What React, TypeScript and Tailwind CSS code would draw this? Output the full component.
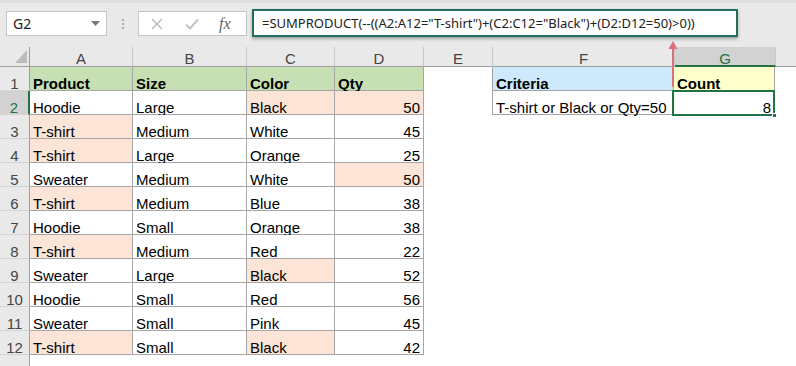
import React from 'react';

type Cell = { v: string; hl?: boolean; num?: boolean };

const rows: Cell[][] = [
  [{ v: 'Hoodie' }, { v: 'Large' }, { v: 'Black', hl: true }, { v: '50', num: true, hl: true }],
  [{ v: 'T-shirt', hl: true }, { v: 'Medium' }, { v: 'White' }, { v: '45', num: true }],
  [{ v: 'T-shirt', hl: true }, { v: 'Large' }, { v: 'Orange' }, { v: '25', num: true }],
  [{ v: 'Sweater' }, { v: 'Medium' }, { v: 'White' }, { v: '50', num: true, hl: true }],
  [{ v: 'T-shirt', hl: true }, { v: 'Medium' }, { v: 'Blue' }, { v: '38', num: true }],
  [{ v: 'Hoodie' }, { v: 'Small' }, { v: 'Orange' }, { v: '38', num: true }],
  [{ v: 'T-shirt', hl: true }, { v: 'Medium' }, { v: 'Red' }, { v: '22', num: true }],
  [{ v: 'Sweater' }, { v: 'Large' }, { v: 'Black', hl: true }, { v: '52', num: true }],
  [{ v: 'Hoodie' }, { v: 'Small' }, { v: 'Red' }, { v: '56', num: true }],
  [{ v: 'Sweater' }, { v: 'Small' }, { v: 'Pink' }, { v: '45', num: true }],
  [{ v: 'T-shirt', hl: true }, { v: 'Small' }, { v: 'Black', hl: true }, { v: '42', num: true }],
];

const colWidths = ['w-[103px]', 'w-[114px]', 'w-[88px]', 'w-[89px]'];
const letters = ['A', 'B', 'C', 'D', 'E', 'F'];
const letterWidths = ['w-[103px]', 'w-[114px]', 'w-[88px]', 'w-[89px]', 'w-[69px]', 'w-[182px]'];

const RowNum: React.FC<{ n: number; active?: boolean }> = ({ n, active }) => (
  <div
    className={`w-[30px] shrink-0 h-full flex items-end justify-center pb-[1px] border-b border-[#d4d4d4] ${
      active
        ? 'bg-[#d2d2d2] text-[#217346] border-r-2 border-r-[#217346]'
        : 'bg-[#e9e9e9] text-[#444] border-r border-r-[#9e9e9e]'
    }`}
  >
    {n}
  </div>
);

const App: React.FC = () => {
  return (
    <div className="w-[796px] h-[366px] overflow-hidden bg-white text-[15px] leading-[11px]" style={{ fontFamily: '"Liberation Sans", Arial, sans-serif' }}>
      {/* Formula bar */}
      <div className="h-[47px] bg-[#e9e9e9] border-t-[3px] border-[#dedede] flex items-start pt-[8px] pl-[6px] leading-none">
        <div className="w-[101px] h-[25px] bg-white border border-[#c6c6c6] flex items-center justify-between px-[6px] text-[14px] text-[#222]" style={{ fontFamily: '"Noto Sans", sans-serif' }}>
          <span>G2</span>
          <svg width="9" height="5" viewBox="0 0 9 5"><path d="M0 0h9L4.5 5z" fill="#777" /></svg>
        </div>
        <div className="w-[31px] h-[25px] flex flex-col items-center justify-center gap-[2px]">
          <span className="w-[2px] h-[2px] bg-[#aaa]" />
          <span className="w-[2px] h-[2px] bg-[#aaa]" />
          <span className="w-[2px] h-[2px] bg-[#aaa]" />
        </div>
        <div className="w-[109px] h-[25px] bg-white border border-[#c6c6c6] flex items-center pl-[12px]">
          <svg width="12" height="12" viewBox="0 0 12 12"><path d="M1 1l10 10M11 1L1 11" stroke="#bdbdbd" strokeWidth="1.5" /></svg>
          <svg className="ml-[22px]" width="14" height="12" viewBox="0 0 14 12"><path d="M1 6.5l4 4L13 1.5" stroke="#c4c4c4" strokeWidth="2" fill="none" /></svg>
          <span className="ml-[20px] text-[16px] italic text-[#666]" style={{ fontFamily: '"Liberation Serif", serif' }}>fx</span>
        </div>
        <div className="ml-[5px] -mt-[2px] w-[486px] h-[28px] bg-white border-2 border-[#1f6e5f] shadow-[0_2px_3px_rgba(0,0,0,0.3)] flex items-center pl-[8px] text-[13px] text-[#222] whitespace-nowrap overflow-hidden" style={{ fontFamily: '"Noto Sans", sans-serif' }}>
          =SUMPRODUCT(--((A2:A12="T-shirt")+(C2:C12="Black")+(D2:D12=50)&gt;0))
        </div>
      </div>

      {/* Sheet */}
      <div className="relative">
        {/* Column headers */}
        <div className="flex h-[20px] bg-[#e9e9e9] text-[#444]">
          <div className="w-[30px] shrink-0 border-r border-b border-[#9e9e9e] relative">
            <svg className="absolute left-[15px] top-[3px]" width="12" height="13" viewBox="0 0 12 13"><path d="M12 0v13H0z" fill="#bcbcbc" /></svg>
          </div>
          {letters.map((l, i) => (
            <div key={l} className={`${letterWidths[i]} shrink-0 border-r border-b border-r-[#c8c8c8] border-b-[#9e9e9e] flex items-end justify-center pb-[2px]`}>
              {l}
            </div>
          ))}
          <div className="w-[101px] shrink-0 bg-[#d2d2d2] text-[#217346] border-b-2 border-[#217346] border-r border-r-[#c8c8c8] flex items-end justify-center pb-[1px]">
            G
          </div>
          <div className="flex-1 border-b border-[#9e9e9e]" />
        </div>

        {/* Row 1 */}
        <div className="flex h-[24px]">
          <RowNum n={1} />
          {['Product', 'Size', 'Color', 'Qty'].map((h, i) => (
            <div key={h} className={`${colWidths[i]} shrink-0 bg-[#c6e0b4] font-bold border-r border-b border-[#a6a6a6] flex items-end pl-[3px] pb-[1px]`}>
              {h}
            </div>
          ))}
          <div className="w-[69px] shrink-0" />
          <div className="w-[182px] shrink-0 bg-[#cde9fb] font-bold border-l border-r border-b border-[#a6a6a6] flex items-end pl-[3px] pb-[1px] -ml-px">
            Criteria
          </div>
          <div className="w-[101px] shrink-0 bg-[#ffffcc] font-bold border-r border-b border-[#a6a6a6] flex items-end pl-[3px] pb-[1px]">
            Count
          </div>
        </div>

        {/* Data rows */}
        {rows.map((r, ri) => (
          <div key={ri} className="flex h-[24px]">
            <RowNum n={ri + 2} active={ri === 0} />
            {r.map((c, ci) => (
              <div
                key={ci}
                className={`${colWidths[ci]} shrink-0 border-r border-b border-[#a6a6a6] flex items-end pb-[1px] ${
                  c.hl ? 'bg-[#fce4d6]' : 'bg-white'
                } ${c.num ? 'justify-end pr-[3px]' : 'pl-[3px]'}`}
              >
                {c.v}
              </div>
            ))}
            {ri === 0 && (
              <>
                <div className="w-[69px] shrink-0" />
                <div className="w-[182px] shrink-0 border-l border-r border-b border-[#a6a6a6] flex items-end pl-[3px] pb-[1px] -ml-px">
                  T-shirt or Black or Qty=50
                </div>
                <div className="w-[101px] shrink-0 border-r border-b border-[#a6a6a6] flex items-end justify-end pr-[3px] pb-[1px] relative">
                  8
                  <div className="absolute -left-[2px] -top-[1px] -right-[1px] -bottom-[2px] border-2 border-[#217346]" />
                  <div className="absolute -right-[3px] -bottom-[4px] w-[5px] h-[5px] bg-[#217346] border border-white" />
                </div>
              </>
            )}
          </div>
        ))}

        {/* Row 13 */}
        <div className="flex h-[24px]">
          <RowNum n={13} />
        </div>

        {/* Arrow */}
        <svg className="absolute left-[668px] -top-[6px]" width="10" height="46" viewBox="0 0 10 46">
          <path d="M5 4v42" stroke="#d9707c" strokeWidth="2" />
          <path d="M5 0l4.5 8h-9z" fill="#d9707c" />
        </svg>
      </div>
    </div>
  );
};

export default App;
